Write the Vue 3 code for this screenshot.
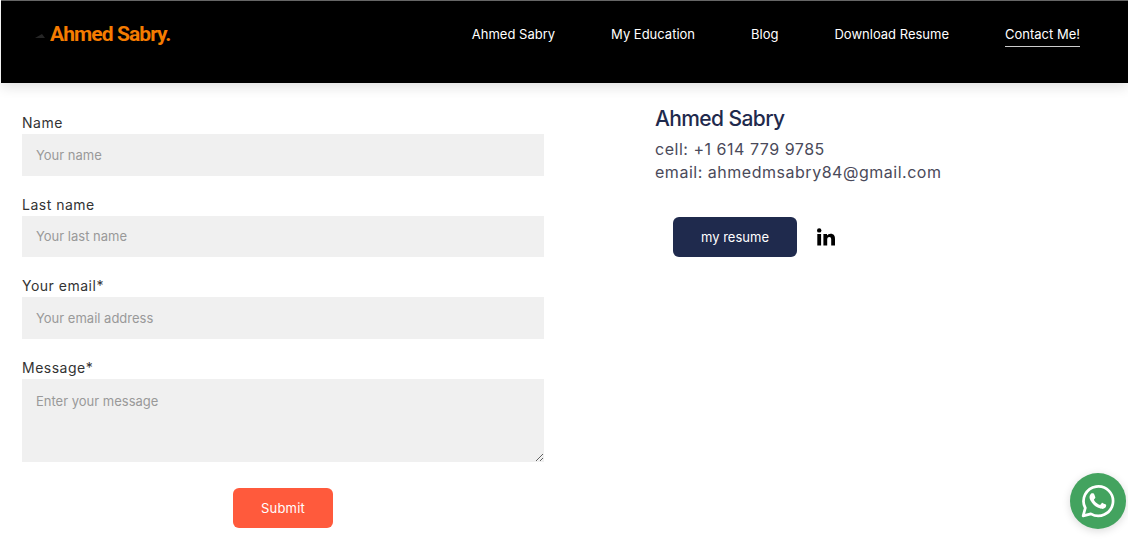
<script setup>
const links = ['Ahmed Sabry', 'My Education', 'Blog', 'Download Resume', 'Contact Me!']
const fields = [
  { label: 'Name', placeholder: 'Your name' },
  { label: 'Last name', placeholder: 'Your last name' },
  { label: 'Your email*', placeholder: 'Your email address' }
]
</script>

<template>
  <div class="page">
    <header class="header">
      <div class="brand">
        <svg class="mark" viewBox="0 0 10 4" width="10" height="4" aria-hidden="true">
          <path d="M0 4 L7 0 L10 4 Z" fill="#262626" />
        </svg>
        <div class="logo">Ahmed Sabry.</div>
      </div>
      <nav class="nav">
        <a v-for="(l, i) in links" :key="l" class="link" :class="{ active: i === 4 }">{{ l }}</a>
      </nav>
    </header>
    <main class="main">
      <form class="form" @submit.prevent>
        <div v-for="f in fields" :key="f.label" class="field">
          <label class="label">{{ f.label }}</label>
          <input class="input" :placeholder="f.placeholder" />
        </div>
        <div class="field">
          <label class="label">Message*</label>
          <textarea class="input area" placeholder="Enter your message"></textarea>
        </div>
        <div class="submit-row"><button class="submit">Submit</button></div>
      </form>
      <section class="info">
        <h2 class="name">Ahmed Sabry</h2>
        <p class="line">cell: +1 614 779 9785</p>
        <p class="line">email: ahmedmsabry84@gmail.com</p>
        <div class="actions">
          <button class="resume">my resume</button>
          <svg class="linkedin" viewBox="0 0 18 18" width="18" height="18" aria-label="LinkedIn">
            <circle cx="2.2" cy="2.4" r="2.2" fill="#000" />
            <rect x="0.3" y="6" width="3.8" height="11.5" fill="#000" />
            <path fill="#000" d="M6.4 6h3.6v1.6C10.6 6.5 12 5.7 13.6 5.7c3.3 0 4.4 2.1 4.4 5.2v6.6h-3.8v-5.9c0-1.5-.3-2.7-1.9-2.7s-2.1 1.2-2.1 2.7v5.9H6.4z" />
          </svg>
        </div>
      </section>
    </main>
    <a class="whatsapp" aria-label="WhatsApp">
      <svg viewBox="0 0 32 32" width="38" height="38">
        <path fill="none" stroke="#fff" stroke-width="2.3" stroke-linejoin="round" d="M3.5 28.5l1.8-6.6A12.4 12.4 0 1 1 10 26.8z" />
        <path fill="#fff" transform="translate(1.9 1.9) scale(0.88)" d="M12.1 9.3c-.3-.7-.6-.7-.9-.7h-.8c-.3 0-.7.1-1.1.5-.4.4-1.4 1.4-1.4 3.3s1.4 3.8 1.6 4.1c.2.3 2.8 4.4 6.8 6 3.3 1.3 4 1.1 4.7 1 .7-.1 2.3-.9 2.6-1.9.3-.9.3-1.7.2-1.9-.1-.2-.4-.3-.8-.5s-2.3-1.1-2.6-1.3c-.4-.1-.6-.2-.9.2-.3.4-1 1.3-1.2 1.5-.2.3-.5.3-.9.1-.4-.2-1.6-.6-3.1-1.9-1.1-1-1.9-2.3-2.1-2.7-.2-.4 0-.6.2-.8l.6-.7c.2-.2.3-.4.4-.7.1-.3.1-.5 0-.7-.1-.2-.8-2.2-1.3-3z" />
      </svg>
    </a>
  </div>
</template>

<style>
html, body { margin: 0; overflow: hidden; background: #fff; }
</style>

<style scoped>
.page {
  position: relative;
  width: 1128px;
  height: 544px;
  overflow: hidden;
  background: #fff;
  font-family: "Inter", "Liberation Sans", sans-serif;
}
.header {
  box-sizing: border-box;
  height: 83px;
  margin-left: 1px;
  border-top: 1px solid #666;
  background: #000;
  display: flex;
  align-items: center;
  justify-content: space-between;
  padding: 0 48px 14px 34px;
  box-shadow: 0 4px 12px rgba(0, 0, 0, 0.12);
  position: relative;
}
.brand { display: flex; align-items: center; gap: 5px; }
.mark { margin-top: 2px; }
.logo {
  color: #f57c00;
  font-family: "Roboto", sans-serif;
  font-weight: 700;
  font-size: 21px;
  letter-spacing: -0.92px;
  margin-top: -2px;
}
.nav { display: flex; gap: 56px; }
.link {
  color: #fff;
  font-size: 13px;
  line-height: 20px;
  padding-bottom: 2px;
  border-bottom: 1px solid transparent;
}
.link.active { border-bottom-color: #ccc; }
.main { display: flex; padding-left: 22px; }
.form { width: 522px; padding-top: 29px; }
.field { margin-bottom: 18px; }
.label {
  display: block;
  color: #333;
  font-size: 14px;
  letter-spacing: 0.5px;
  line-height: 22px;
}
.input {
  display: block;
  box-sizing: border-box;
  width: 100%;
  height: 41.67px;
  border: 0;
  outline: 0;
  padding: 0 14px;
  background: #f0f0f0;
  font-family: inherit;
  font-size: 13px;
  color: #333;
}
.input::placeholder { color: #999; opacity: 1; }
.area { height: 83px; padding-top: 14px; resize: vertical; }
.submit-row { display: flex; justify-content: center; margin-top: 26px; }
.submit {
  width: 100px;
  height: 40px;
  border: 0;
  border-radius: 6px;
  background: #ff5a3c;
  color: #fff;
  font-family: inherit;
  font-size: 13px;
  letter-spacing: 0.2px;
}
.info { margin-left: 111px; padding-top: 23px; }
.name {
  margin: 0 0 6px;
  color: #1f2a4d;
  font-family: "Inter", sans-serif;
  font-size: 21px;
  font-weight: 500;
  letter-spacing: -0.6px;
  line-height: 26px;
}
.line {
  margin: 0;
  color: #4a4a5a;
  font-size: 16px;
  letter-spacing: 0.52px;
  line-height: 23px;
}
.actions {
  display: flex;
  align-items: center;
  gap: 20px;
  margin-top: 33px;
  margin-left: 18px;
}
.resume {
  width: 124px;
  height: 40px;
  border: 0;
  border-radius: 6px;
  background: #1f2a4d;
  color: #fff;
  font-family: inherit;
  font-size: 13px;
}
.whatsapp {
  position: absolute;
  left: 1070px;
  top: 473px;
  width: 56px;
  height: 56px;
  border-radius: 50%;
  background: #43a35f;
  display: flex;
  align-items: center;
  justify-content: center;
  box-shadow: 0 2px 8px rgba(0, 0, 0, 0.15);
}
</style>
